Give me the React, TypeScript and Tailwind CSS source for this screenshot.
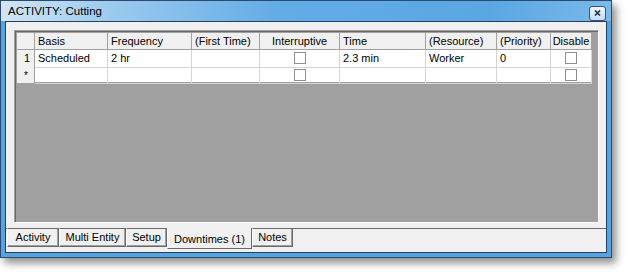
import React from 'react';

type Col = { label: string; align: 'left' | 'center' };

const columns: Col[] = [
  { label: 'Basis', align: 'left' },
  { label: 'Frequency', align: 'left' },
  { label: '(First Time)', align: 'left' },
  { label: 'Interruptive', align: 'center' },
  { label: 'Time', align: 'left' },
  { label: '(Resource)', align: 'left' },
  { label: '(Priority)', align: 'left' },
  { label: 'Disable', align: 'center' },
];

const rows = [
  { head: '1', cells: ['Scheduled', '2 hr', '', 'check', '2.3 min', 'Worker', '0', 'check'] },
  { head: '*', cells: ['', '', '', 'check', '', '', '', 'check'] },
];

const gridCols = 'grid grid-cols-[18px_73px_84px_68px_80px_86px_71px_54px_41px]';

const CheckBox: React.FC = () => (
  <div className="w-[12px] h-[12px] border border-[#8e8f8f] bg-white" />
);

const tabs = [
  { label: 'Activity', w: 'w-[52px]' },
  { label: 'Multi Entity', w: 'w-[67px]' },
  { label: 'Setup', w: 'w-[41px]' },
  { label: 'Downtimes (1)', w: 'w-[85px]', active: true },
  { label: 'Notes', w: 'w-[41px]' },
];

const App: React.FC = () => {
  return (
    <div className="w-[627px] h-[273px] bg-white overflow-hidden font-['Liberation_Sans',Arial,sans-serif] text-[11px] text-black">
      <div className="w-[612px] h-[258px] flex flex-col border border-[#2c4a6c] bg-[#56a3e1] shadow-[4px_5px_8px_rgba(0,0,0,0.45)]">
        {/* title bar */}
        <div className="h-[20px] flex items-center justify-between pl-[7px] pr-[5px] bg-[linear-gradient(to_right,#d2e5f6,#9ccaef_18%,#64ace6_45%,#5aa6e3_80%,#7ab9ea)]">
          <span className="text-[11.5px] leading-none pt-[2px]">ACTIVITY: Cutting</span>
          <div className="w-[17px] h-[15px] mt-[4px] rounded-[3px] border border-[#34577d] bg-[linear-gradient(to_bottom,#eef5fb,#c4dcf1)] flex items-center justify-center">
            <svg width="7" height="6" viewBox="0 0 7 6">
              <path d="M1 0.5 L6 5.5 M6 0.5 L1 5.5" stroke="#1f2f44" strokeWidth="1.6" />
            </svg>
          </div>
        </div>

        {/* client */}
        <div className="flex-1 mx-[4px] mb-[4px] border border-[#24405e] bg-[#f0f0f0] flex flex-col">
          <div className="pt-[8px] pl-[8px]">
            <div className="w-[585px] h-[193px] border-t border-l border-[#a0a0a0] border-b border-r border-b-white border-r-white">
              <div className="w-full h-full border-t border-l border-[#696969] bg-[#a0a0a0] pt-[1px] pl-[1px]">
                <div className="w-[575px] bg-white">
                  <div className={`${gridCols} h-[17px] bg-[#f0f0f0]`}>
                    <div className="border-r border-b border-[#a0a0a0]" />
                    {columns.map((c) => (
                      <div
                        key={c.label}
                        className={`border-r border-b border-[#a0a0a0] flex items-center ${c.align === 'center' ? 'justify-center' : 'pl-[3px]'} whitespace-nowrap overflow-hidden`}
                      >
                        {c.label}
                      </div>
                    ))}
                  </div>
                  {rows.map((r) => (
                    <div key={r.head} className={`${gridCols} h-[16px]`}>
                      <div className="bg-[#f0f0f0] border-r border-b border-[#a0a0a0] flex items-center justify-end pr-[4px]">
                        {r.head === '*' ? <span className="text-[10px] pr-[2px] pt-[2px]">*</span> : r.head}
                      </div>
                      {r.cells.map((v, i) => (
                        <div
                          key={i}
                          className={`border-r border-b border-[#d4d4d4] flex items-center ${v === 'check' ? 'justify-center' : 'pl-[3px]'} whitespace-nowrap overflow-hidden`}
                        >
                          {v === 'check' ? <CheckBox /> : v}
                        </div>
                      ))}
                    </div>
                  ))}
                </div>
              </div>
            </div>
          </div>

          {/* tab strip */}
          <div className="mt-[5px] flex items-start h-[22px]">
            <div className="w-[1px] h-[2px] border-t border-[#6e6e6e]" />
            {tabs.map((t) =>
              t.active ? (
                <div
                  key={t.label}
                  className={`${t.w} h-[21px] bg-[#f0f0f0] border-l border-white border-r border-r-[#696969] border-b border-b-[#696969] flex items-center justify-center pt-[3px] whitespace-nowrap`}
                >
                  {t.label}
                </div>
              ) : (
                <div
                  key={t.label}
                  className={`${t.w} h-[19px] bg-[#f0f0f0] border-t border-t-[#696969] border-l border-l-white border-r border-r-[#696969] border-b border-b-[#696969] shadow-[inset_-1px_-1px_0_#a0a0a0] flex items-center justify-center whitespace-nowrap`}
                >
                  {t.label}
                </div>
              )
            )}
            <div className="flex-1 h-[2px] border-t border-[#696969]" />
          </div>
        </div>
      </div>
    </div>
  );
};

export default App;
